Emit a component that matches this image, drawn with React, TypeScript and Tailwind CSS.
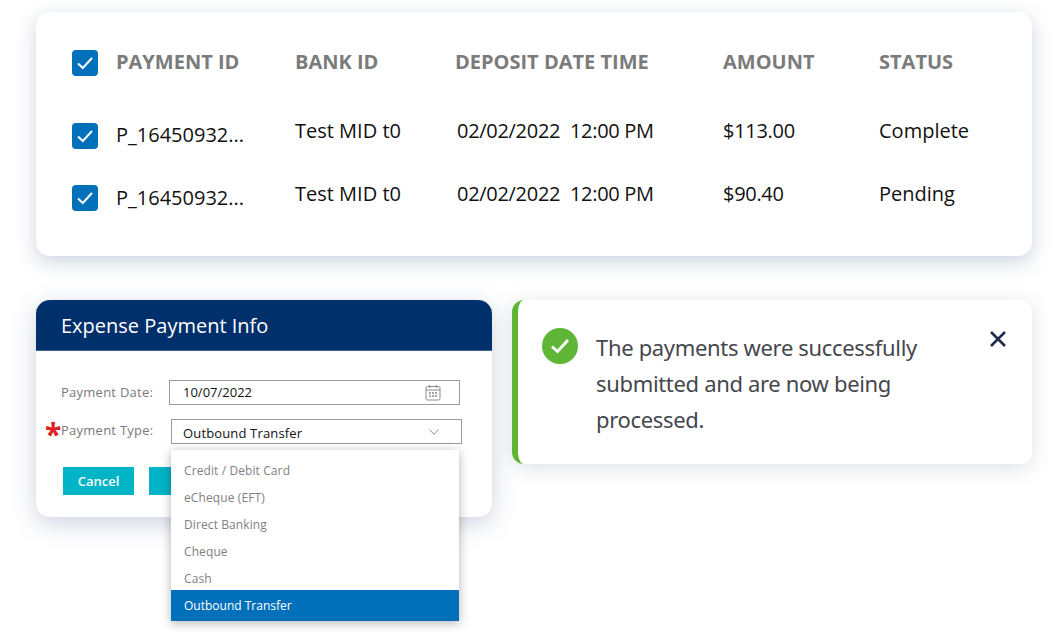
import { ChevronDown } from 'lucide-react';

const columns = ['PAYMENT ID', 'BANK ID', 'DEPOSIT DATE TIME', 'AMOUNT', 'STATUS'];

const rows = [
  { id: 'P_16450932...', bank: 'Test MID t0', date: '02/02/2022  12:00 PM', amount: '$113.00', status: 'Complete', idTop: '-mt-[1px]', top: '-mt-[5px]' },
  { id: 'P_16450932...', bank: 'Test MID t0', date: '02/02/2022  12:00 PM', amount: '$90.40', status: 'Pending', idTop: 'mt-0', top: '-mt-[4px]' },
];

const paymentTypes = ['Credit / Debit Card', 'eCheque (EFT)', 'Direct Banking', 'Cheque', 'Cash'];

function CheckBox() {
  return (
    <div className="flex h-[26px] w-[26px] shrink-0 items-center justify-center rounded-[4px] bg-[#0070bb]">
      <svg width="18" height="14" viewBox="0 0 18 14" fill="none">
        <path d="M2 7.5 L6.8 12 L16 2" stroke="#ffffff" strokeWidth="2" />
      </svg>
    </div>
  );
}

function CalendarIcon() {
  return (
    <svg width="16" height="17" viewBox="0 0 16 17" fill="none" stroke="#8a8a8a" strokeWidth="1">
      <rect x="1" y="2.5" width="14" height="13.5" rx="1.5" />
      <path d="M1 6 H15 M4.5 1 V4 M11.5 1 V4" />
      <path d="M4 9 H6 M7 9 H9 M10 9 H12 M4 12 H6 M7 12 H9 M10 12 H12" strokeWidth="1.4" />
    </svg>
  );
}

export default function App() {
  return (
    <div className="h-[637px] w-[1060px] overflow-hidden bg-white pl-[36px] pt-[12px] font-['Open_Sans',sans-serif]">
      {/* Payments table */}
      <div className="h-[244px] w-[996px] rounded-[14px] bg-white pl-[36px] pt-[38px] shadow-[0_6px_20px_rgba(90,110,150,0.3)]">
        <div className="flex h-[26px] items-start">
          <CheckBox />
          <div className="ml-[18px] mt-[1px] w-[179px] text-[20px] font-bold leading-[22px] text-[#7b7b7b]">{columns[0]}</div>
          <div className="mt-[1px] w-[160px] text-[20px] font-bold leading-[22px] text-[#7b7b7b]">{columns[1]}</div>
          <div className="mt-[1px] w-[268px] text-[20px] font-bold leading-[22px] text-[#7b7b7b]">{columns[2]}</div>
          <div className="mt-[1px] w-[156px] text-[20px] font-bold leading-[22px] text-[#7b7b7b]">{columns[3]}</div>
          <div className="mt-[1px] text-[20px] font-bold leading-[22px] text-[#7b7b7b]">{columns[4]}</div>
        </div>
        <div className="mt-[47px] flex flex-col gap-[36px]">
          {rows.map((row) => (
            <div key={row.amount} className="flex h-[26px] items-start text-[20px] leading-[26px] text-[#111111]">
              <CheckBox />
              <div className={`ml-[18px] w-[179px] ${row.idTop}`}>{row.id}</div>
              <div className={`w-[162px] ${row.top}`}>{row.bank}</div>
              <div className={`w-[266px] whitespace-pre tracking-[-0.3px] ${row.top}`}>{row.date}</div>
              <div className={`w-[156px] tracking-[-0.3px] ${row.top}`}>{row.amount}</div>
              <div className={row.top}>{row.status}</div>
            </div>
          ))}
        </div>
      </div>

      <div className="mt-[44px] flex items-start gap-[20px]">
        {/* Expense form */}
        <div className="relative h-[217px] w-[456px] shrink-0 rounded-[14px] bg-white shadow-[0_6px_24px_rgba(90,110,150,0.3)]">
          <div className="flex h-[51px] items-center rounded-t-[14px] border-b border-b-[#3a5f8f] bg-[#00306b] pl-[25px] pt-[1px] text-[20px] text-white">
            Expense Payment Info
          </div>
          <div className="flex items-center pl-[25px] pt-[29px]">
            <div className="w-[108px] text-[13px] tracking-[0.25px] text-[#7a7a7a]">Payment Date:</div>
            <div className="flex h-[25px] w-[291px] items-center justify-between border border-[#9a9a9a] pl-[13px] pr-[18px] text-[13px] text-[#111111]">
              10/07/2022
              <CalendarIcon />
            </div>
          </div>
          <div className="relative mt-[14px] flex items-center pl-[25px]">
            <span className="absolute left-[9px] -top-[2px] text-[30px] font-bold leading-[34px] text-[#e02020]">*</span>
            <div className="-mt-[2px] w-[110px] text-[13px] tracking-[0.25px] text-[#7a7a7a]">Payment Type:</div>
            <div className="flex h-[25px] w-[291px] items-center justify-between border border-[#9a9a9a] pl-[11px] pr-[18px] text-[13px] font-medium tracking-[0.15px] text-[#111111]">
              <span className="pt-[5px]">Outbound Transfer</span>
              <ChevronDown size={18} strokeWidth={0.9} color="#555555" />
            </div>
          </div>
          <div className="ml-[27px] mt-[23px] flex gap-[15px]">
            <div className="flex h-[28px] w-[71px] items-center justify-center bg-[#00b4c8] pt-[2px] text-[13px] font-semibold text-white">
              Cancel
            </div>
            <div className="h-[28px] w-[72px] bg-[#00b4c8]" />
          </div>

          {/* Open dropdown */}
          <div className="absolute left-[135px] top-[150px] w-[288px] bg-white pt-[7px] shadow-[0_2px_10px_rgba(0,0,0,0.3)]">
            {paymentTypes.map((t) => (
              <div key={t} className="flex h-[27px] items-center pl-[13px] text-[12px] font-medium tracking-[0.1px] text-[#7f7f7f]">
                {t}
              </div>
            ))}
            <div className="relative -mt-[2px] flex h-[31px] items-center bg-[#0070bb] pl-[13px] text-[12px] font-medium text-white">
              Outbound Transfer
            </div>
          </div>
        </div>

        {/* Success alert */}
        <div className="relative flex h-[164px] w-[520px] shrink-0 rounded-[12px] border-l-[6px] border-l-[#5fb636] bg-white pl-[24px] pt-[28px] shadow-[0_4px_20px_rgba(90,100,120,0.2)]">
          <div className="flex h-[36px] w-[36px] shrink-0 items-center justify-center rounded-full bg-[#5fb636]">
            <svg width="22" height="18" viewBox="0 0 22 18" fill="none">
              <path d="M3 9.5 L8.5 14.5 L19 3" stroke="#ffffff" strokeWidth="3" />
            </svg>
          </div>
          <div className="ml-[18px] mt-[1px] w-[360px] font-['Noto_Sans',sans-serif] text-[22px] leading-[36px] tracking-[-0.33px] text-[#45474d]">
            The payments were successfully submitted and are now being processed.
          </div>
          <svg className="absolute right-[25px] top-[30px]" width="18" height="18" viewBox="0 0 18 18" fill="none">
            <path d="M2 2 L16 16 M16 2 L2 16" stroke="#1f2a4d" strokeWidth="2.6" />
          </svg>
        </div>
      </div>
    </div>
  );
}
